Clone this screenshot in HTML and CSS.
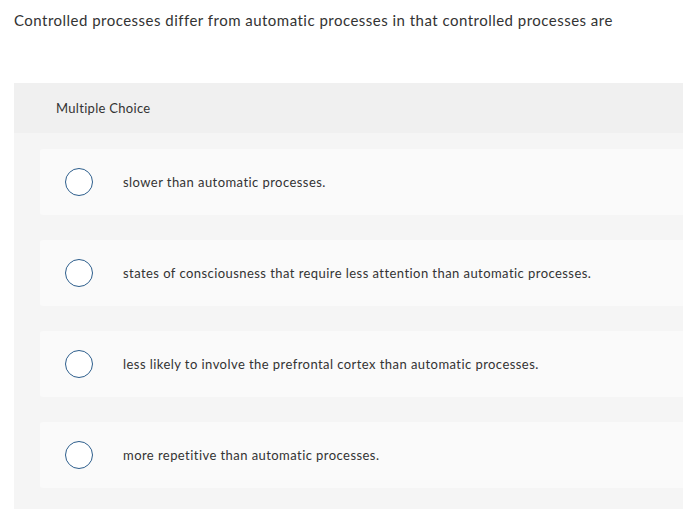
FILE: index.html
```html
<!DOCTYPE html>
<html lang="en">
<head>
<meta charset="utf-8">
<link rel="stylesheet" href="styles.css">
</head>
<body>
<div class="question">Controlled processes differ from automatic processes in that controlled processes are</div>
<section class="panel">
  <div class="panel-header">Multiple Choice</div>
  <div class="options">
    <div class="option"><span class="radio"></span><span class="label">slower than automatic processes.</span></div>
    <div class="option"><span class="radio"></span><span class="label">states of consciousness that require less attention than automatic processes.</span></div>
    <div class="option"><span class="radio"></span><span class="label">less likely to involve the prefrontal cortex than automatic processes.</span></div>
    <div class="option"><span class="radio"></span><span class="label">more repetitive than automatic processes.</span></div>
  </div>
</section>
</body>
</html>
```
FILE: styles.css
```css
html, body {
  margin: 0;
  padding: 0;
  background: #ffffff;
  font-family: Lato, "Open Sans", Arial, sans-serif;
  color: #333333;
  overflow: hidden;
}
.question {
  padding: 11px 0 0 14px;
  font-size: 15px;
  line-height: 18px;
  letter-spacing: 0.48px;
  height: 83px;
  box-sizing: border-box;
}
.panel {
  margin-left: 14px;
  background: #f5f5f5;
  padding-bottom: 40px;
}
.panel-header {
  background: #f0f0f0;
  height: 50px;
  display: flex;
  align-items: center;
  padding-left: 42px;
  font-size: 13px;
  letter-spacing: 0.3px;
}
.options {
  display: flex;
  flex-direction: column;
  gap: 25px;
  padding: 16px 0 0 26px;
}
.option {
  background: #fafafa;
  height: 66px;
  border-radius: 3px 0 0 3px;
  display: flex;
  align-items: center;
  padding-left: 25px;
}
.radio {
  width: 28px;
  height: 28px;
  box-sizing: border-box;
  border: 1.5px solid #2d5e8c;
  border-radius: 50%;
  background: #ffffff;
  flex: none;
}
.label {
  margin-left: 30px;
  font-size: 13px;
  letter-spacing: 0.44px;
}
```
